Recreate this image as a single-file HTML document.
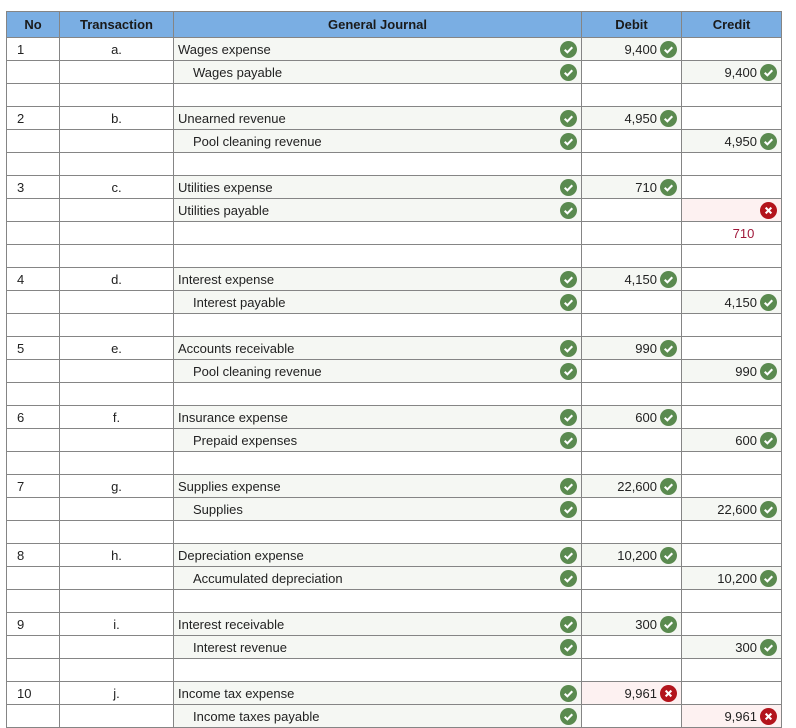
<!DOCTYPE html>
<html><head><meta charset="utf-8"><style>
html,body{margin:0;padding:0;background:#fff;width:796px;height:728px;overflow:hidden}
table{position:absolute;left:6px;top:11px;border-collapse:collapse;table-layout:fixed;font-family:"Liberation Sans",Arial,sans-serif;font-size:13px;color:#222}
tr{height:23px}
td,th{border:1px solid #858585;height:23px;padding:0;box-sizing:border-box;white-space:nowrap;overflow:hidden;line-height:21px}
th{background:#7aaee3;height:26px;font-weight:bold;color:#1a1a1a;font-size:13px}
tr.h{height:26px}
td.n{padding-left:10px}
td.t{text-align:center}
td.j{padding-left:4px;position:relative}
td.j.i{padding-left:19px}
.g{background:#f5f7f3}
.p{background:#fdf1f1}
td.a{text-align:right;padding-right:4px}
svg{vertical-align:-4px;margin-left:3px}
td.j svg{position:absolute;right:4px;top:50%;margin-top:-8px}
.r{color:#a0183a;text-align:center;padding-left:24px}
</style></head><body>
<table>
<colgroup><col style="width:53px"><col style="width:114px"><col style="width:408px"><col style="width:100px"><col style="width:100px"></colgroup>
<tr class="h"><th>No</th><th>Transaction</th><th>General Journal</th><th>Debit</th><th>Credit</th></tr>

<tr><td class="n">1</td><td class="t">a.</td><td class="j g">Wages expense<svg width="17" height="17" viewBox="0 0 18 18"><circle cx="9" cy="9" r="9" fill="#5a8a4f"/><path d="M5 9.3l2.8 2.7L13 6.6" stroke="#fff" stroke-width="2.2" fill="none"/></svg></td><td class="a g">9,400<svg width="17" height="17" viewBox="0 0 18 18"><circle cx="9" cy="9" r="9" fill="#5a8a4f"/><path d="M5 9.3l2.8 2.7L13 6.6" stroke="#fff" stroke-width="2.2" fill="none"/></svg></td><td></td></tr>
<tr><td></td><td></td><td class="j i g">Wages payable<svg width="17" height="17" viewBox="0 0 18 18"><circle cx="9" cy="9" r="9" fill="#5a8a4f"/><path d="M5 9.3l2.8 2.7L13 6.6" stroke="#fff" stroke-width="2.2" fill="none"/></svg></td><td></td><td class="a g">9,400<svg width="17" height="17" viewBox="0 0 18 18"><circle cx="9" cy="9" r="9" fill="#5a8a4f"/><path d="M5 9.3l2.8 2.7L13 6.6" stroke="#fff" stroke-width="2.2" fill="none"/></svg></td></tr>
<tr><td></td><td></td><td></td><td></td><td></td></tr>

<tr><td class="n">2</td><td class="t">b.</td><td class="j g">Unearned revenue<svg width="17" height="17" viewBox="0 0 18 18"><circle cx="9" cy="9" r="9" fill="#5a8a4f"/><path d="M5 9.3l2.8 2.7L13 6.6" stroke="#fff" stroke-width="2.2" fill="none"/></svg></td><td class="a g">4,950<svg width="17" height="17" viewBox="0 0 18 18"><circle cx="9" cy="9" r="9" fill="#5a8a4f"/><path d="M5 9.3l2.8 2.7L13 6.6" stroke="#fff" stroke-width="2.2" fill="none"/></svg></td><td></td></tr>
<tr><td></td><td></td><td class="j i g">Pool cleaning revenue<svg width="17" height="17" viewBox="0 0 18 18"><circle cx="9" cy="9" r="9" fill="#5a8a4f"/><path d="M5 9.3l2.8 2.7L13 6.6" stroke="#fff" stroke-width="2.2" fill="none"/></svg></td><td></td><td class="a g">4,950<svg width="17" height="17" viewBox="0 0 18 18"><circle cx="9" cy="9" r="9" fill="#5a8a4f"/><path d="M5 9.3l2.8 2.7L13 6.6" stroke="#fff" stroke-width="2.2" fill="none"/></svg></td></tr>
<tr><td></td><td></td><td></td><td></td><td></td></tr>

<tr><td class="n">3</td><td class="t">c.</td><td class="j g">Utilities expense<svg width="17" height="17" viewBox="0 0 18 18"><circle cx="9" cy="9" r="9" fill="#5a8a4f"/><path d="M5 9.3l2.8 2.7L13 6.6" stroke="#fff" stroke-width="2.2" fill="none"/></svg></td><td class="a g">710<svg width="17" height="17" viewBox="0 0 18 18"><circle cx="9" cy="9" r="9" fill="#5a8a4f"/><path d="M5 9.3l2.8 2.7L13 6.6" stroke="#fff" stroke-width="2.2" fill="none"/></svg></td><td></td></tr>
<tr><td></td><td></td><td class="j g">Utilities payable<svg width="17" height="17" viewBox="0 0 18 18"><circle cx="9" cy="9" r="9" fill="#5a8a4f"/><path d="M5 9.3l2.8 2.7L13 6.6" stroke="#fff" stroke-width="2.2" fill="none"/></svg></td><td></td><td class="a p"><svg width="17" height="17" viewBox="0 0 18 18"><circle cx="9" cy="9" r="9" fill="#b3141c"/><path d="M6 6l6 6M12 6l-6 6" stroke="#fff" stroke-width="2.2"/></svg></td></tr>
<tr><td></td><td></td><td></td><td></td><td class="r">710</td></tr>
<tr><td></td><td></td><td></td><td></td><td></td></tr>

<tr><td class="n">4</td><td class="t">d.</td><td class="j g">Interest expense<svg width="17" height="17" viewBox="0 0 18 18"><circle cx="9" cy="9" r="9" fill="#5a8a4f"/><path d="M5 9.3l2.8 2.7L13 6.6" stroke="#fff" stroke-width="2.2" fill="none"/></svg></td><td class="a g">4,150<svg width="17" height="17" viewBox="0 0 18 18"><circle cx="9" cy="9" r="9" fill="#5a8a4f"/><path d="M5 9.3l2.8 2.7L13 6.6" stroke="#fff" stroke-width="2.2" fill="none"/></svg></td><td></td></tr>
<tr><td></td><td></td><td class="j i g">Interest payable<svg width="17" height="17" viewBox="0 0 18 18"><circle cx="9" cy="9" r="9" fill="#5a8a4f"/><path d="M5 9.3l2.8 2.7L13 6.6" stroke="#fff" stroke-width="2.2" fill="none"/></svg></td><td></td><td class="a g">4,150<svg width="17" height="17" viewBox="0 0 18 18"><circle cx="9" cy="9" r="9" fill="#5a8a4f"/><path d="M5 9.3l2.8 2.7L13 6.6" stroke="#fff" stroke-width="2.2" fill="none"/></svg></td></tr>
<tr><td></td><td></td><td></td><td></td><td></td></tr>

<tr><td class="n">5</td><td class="t">e.</td><td class="j g">Accounts receivable<svg width="17" height="17" viewBox="0 0 18 18"><circle cx="9" cy="9" r="9" fill="#5a8a4f"/><path d="M5 9.3l2.8 2.7L13 6.6" stroke="#fff" stroke-width="2.2" fill="none"/></svg></td><td class="a g">990<svg width="17" height="17" viewBox="0 0 18 18"><circle cx="9" cy="9" r="9" fill="#5a8a4f"/><path d="M5 9.3l2.8 2.7L13 6.6" stroke="#fff" stroke-width="2.2" fill="none"/></svg></td><td></td></tr>
<tr><td></td><td></td><td class="j i g">Pool cleaning revenue<svg width="17" height="17" viewBox="0 0 18 18"><circle cx="9" cy="9" r="9" fill="#5a8a4f"/><path d="M5 9.3l2.8 2.7L13 6.6" stroke="#fff" stroke-width="2.2" fill="none"/></svg></td><td></td><td class="a g">990<svg width="17" height="17" viewBox="0 0 18 18"><circle cx="9" cy="9" r="9" fill="#5a8a4f"/><path d="M5 9.3l2.8 2.7L13 6.6" stroke="#fff" stroke-width="2.2" fill="none"/></svg></td></tr>
<tr><td></td><td></td><td></td><td></td><td></td></tr>

<tr><td class="n">6</td><td class="t">f.</td><td class="j g">Insurance expense<svg width="17" height="17" viewBox="0 0 18 18"><circle cx="9" cy="9" r="9" fill="#5a8a4f"/><path d="M5 9.3l2.8 2.7L13 6.6" stroke="#fff" stroke-width="2.2" fill="none"/></svg></td><td class="a g">600<svg width="17" height="17" viewBox="0 0 18 18"><circle cx="9" cy="9" r="9" fill="#5a8a4f"/><path d="M5 9.3l2.8 2.7L13 6.6" stroke="#fff" stroke-width="2.2" fill="none"/></svg></td><td></td></tr>
<tr><td></td><td></td><td class="j i g">Prepaid expenses<svg width="17" height="17" viewBox="0 0 18 18"><circle cx="9" cy="9" r="9" fill="#5a8a4f"/><path d="M5 9.3l2.8 2.7L13 6.6" stroke="#fff" stroke-width="2.2" fill="none"/></svg></td><td></td><td class="a g">600<svg width="17" height="17" viewBox="0 0 18 18"><circle cx="9" cy="9" r="9" fill="#5a8a4f"/><path d="M5 9.3l2.8 2.7L13 6.6" stroke="#fff" stroke-width="2.2" fill="none"/></svg></td></tr>
<tr><td></td><td></td><td></td><td></td><td></td></tr>

<tr><td class="n">7</td><td class="t">g.</td><td class="j g">Supplies expense<svg width="17" height="17" viewBox="0 0 18 18"><circle cx="9" cy="9" r="9" fill="#5a8a4f"/><path d="M5 9.3l2.8 2.7L13 6.6" stroke="#fff" stroke-width="2.2" fill="none"/></svg></td><td class="a g">22,600<svg width="17" height="17" viewBox="0 0 18 18"><circle cx="9" cy="9" r="9" fill="#5a8a4f"/><path d="M5 9.3l2.8 2.7L13 6.6" stroke="#fff" stroke-width="2.2" fill="none"/></svg></td><td></td></tr>
<tr><td></td><td></td><td class="j i g">Supplies<svg width="17" height="17" viewBox="0 0 18 18"><circle cx="9" cy="9" r="9" fill="#5a8a4f"/><path d="M5 9.3l2.8 2.7L13 6.6" stroke="#fff" stroke-width="2.2" fill="none"/></svg></td><td></td><td class="a g">22,600<svg width="17" height="17" viewBox="0 0 18 18"><circle cx="9" cy="9" r="9" fill="#5a8a4f"/><path d="M5 9.3l2.8 2.7L13 6.6" stroke="#fff" stroke-width="2.2" fill="none"/></svg></td></tr>
<tr><td></td><td></td><td></td><td></td><td></td></tr>

<tr><td class="n">8</td><td class="t">h.</td><td class="j g">Depreciation expense<svg width="17" height="17" viewBox="0 0 18 18"><circle cx="9" cy="9" r="9" fill="#5a8a4f"/><path d="M5 9.3l2.8 2.7L13 6.6" stroke="#fff" stroke-width="2.2" fill="none"/></svg></td><td class="a g">10,200<svg width="17" height="17" viewBox="0 0 18 18"><circle cx="9" cy="9" r="9" fill="#5a8a4f"/><path d="M5 9.3l2.8 2.7L13 6.6" stroke="#fff" stroke-width="2.2" fill="none"/></svg></td><td></td></tr>
<tr><td></td><td></td><td class="j i g">Accumulated depreciation<svg width="17" height="17" viewBox="0 0 18 18"><circle cx="9" cy="9" r="9" fill="#5a8a4f"/><path d="M5 9.3l2.8 2.7L13 6.6" stroke="#fff" stroke-width="2.2" fill="none"/></svg></td><td></td><td class="a g">10,200<svg width="17" height="17" viewBox="0 0 18 18"><circle cx="9" cy="9" r="9" fill="#5a8a4f"/><path d="M5 9.3l2.8 2.7L13 6.6" stroke="#fff" stroke-width="2.2" fill="none"/></svg></td></tr>
<tr><td></td><td></td><td></td><td></td><td></td></tr>

<tr><td class="n">9</td><td class="t">i.</td><td class="j g">Interest receivable<svg width="17" height="17" viewBox="0 0 18 18"><circle cx="9" cy="9" r="9" fill="#5a8a4f"/><path d="M5 9.3l2.8 2.7L13 6.6" stroke="#fff" stroke-width="2.2" fill="none"/></svg></td><td class="a g">300<svg width="17" height="17" viewBox="0 0 18 18"><circle cx="9" cy="9" r="9" fill="#5a8a4f"/><path d="M5 9.3l2.8 2.7L13 6.6" stroke="#fff" stroke-width="2.2" fill="none"/></svg></td><td></td></tr>
<tr><td></td><td></td><td class="j i g">Interest revenue<svg width="17" height="17" viewBox="0 0 18 18"><circle cx="9" cy="9" r="9" fill="#5a8a4f"/><path d="M5 9.3l2.8 2.7L13 6.6" stroke="#fff" stroke-width="2.2" fill="none"/></svg></td><td></td><td class="a g">300<svg width="17" height="17" viewBox="0 0 18 18"><circle cx="9" cy="9" r="9" fill="#5a8a4f"/><path d="M5 9.3l2.8 2.7L13 6.6" stroke="#fff" stroke-width="2.2" fill="none"/></svg></td></tr>
<tr><td></td><td></td><td></td><td></td><td></td></tr>

<tr><td class="n">10</td><td class="t">j.</td><td class="j g">Income tax expense<svg width="17" height="17" viewBox="0 0 18 18"><circle cx="9" cy="9" r="9" fill="#5a8a4f"/><path d="M5 9.3l2.8 2.7L13 6.6" stroke="#fff" stroke-width="2.2" fill="none"/></svg></td><td class="a p">9,961<svg width="17" height="17" viewBox="0 0 18 18"><circle cx="9" cy="9" r="9" fill="#b3141c"/><path d="M6 6l6 6M12 6l-6 6" stroke="#fff" stroke-width="2.2"/></svg></td><td></td></tr>
<tr><td></td><td></td><td class="j i g">Income taxes payable<svg width="17" height="17" viewBox="0 0 18 18"><circle cx="9" cy="9" r="9" fill="#5a8a4f"/><path d="M5 9.3l2.8 2.7L13 6.6" stroke="#fff" stroke-width="2.2" fill="none"/></svg></td><td></td><td class="a p">9,961<svg width="17" height="17" viewBox="0 0 18 18"><circle cx="9" cy="9" r="9" fill="#b3141c"/><path d="M6 6l6 6M12 6l-6 6" stroke="#fff" stroke-width="2.2"/></svg></td></tr>
</table>
</body></html>
